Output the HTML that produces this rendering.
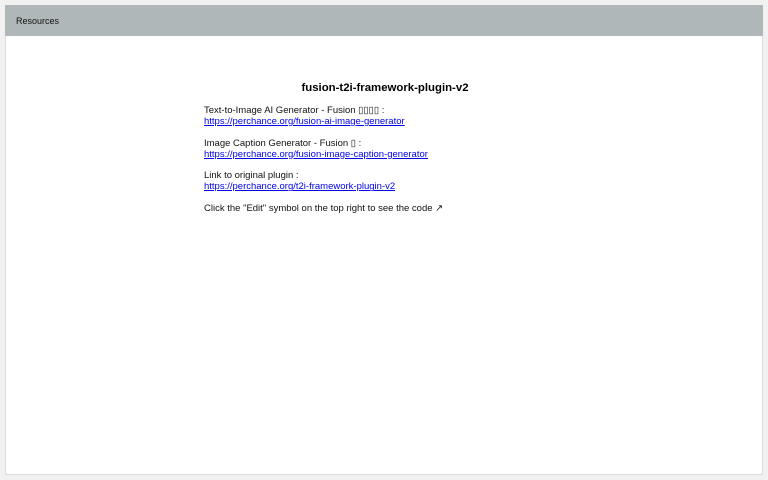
<!DOCTYPE html>
<html><head><style>
body{margin:0;width:768px;height:480px;background:#f1f1f1;font-family:"Liberation Sans",sans-serif;overflow:hidden}
.panel{position:absolute;left:5px;top:5px;width:758px;height:470px;background:#fff;border:1px solid #ddd;border-top:none;box-sizing:border-box}
.hdr{height:31px;background:#b0b7b9;font-size:9px;color:#111;line-height:32px;padding-left:11px;margin:0 -1px}
h1{position:absolute;left:0;width:758px;top:77px;margin:0;text-align:center;font-size:11.4px;font-weight:bold;box-sizing:border-box}
.c{position:absolute;left:198px;top:100px;font-size:9.5px;line-height:11px;color:#111}
.c p{margin:0 0 10.7px 0}
a{color:#00e;text-decoration:underline}
</style></head><body>
<div class="panel"><div class="hdr">Resources</div>
<h1>fusion-t2i-framework-plugin-v2</h1>
<div class="c">
<p>Text-to-Image AI Generator - Fusion ▯▯▯▯ :<br><a>https://perchance.org/fusion-ai-image-generator</a></p>
<p>Image Caption Generator - Fusion ▯ :<br><a>https://perchance.org/fusion-image-caption-generator</a></p>
<p>Link to original plugin :<br><a>https://perchance.org/t2i-framework-plugin-v2</a></p>
<p>Click the "Edit" symbol on the top right to see the code ↗</p>
</div></div>
</body></html>
